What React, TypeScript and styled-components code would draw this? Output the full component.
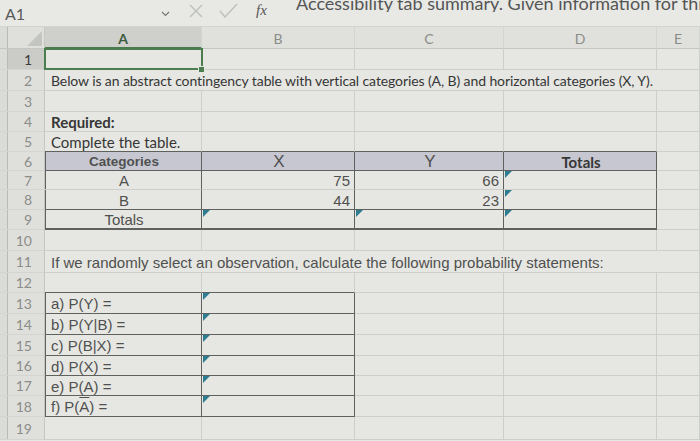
import React from "react";
import styled, { createGlobalStyle, css } from "styled-components";

const GlobalStyle = createGlobalStyle`
  html, body {
    margin: 0;
    padding: 0;
    background: #e6e7e2;
    overflow: hidden;
  }
  body {
    font-family: "Liberation Sans", Arial, sans-serif;
  }
`;

const GRID = "#cdcfca";
const DARK = "#5f615e";
const CAL = `"Lato", "Open Sans", sans-serif`;
const ARI = `"Liberation Sans", Arial, sans-serif`;

const Screen = styled.div`
  width: 700px;
  height: 441px;
  overflow: hidden;
  display: flex;
  flex-direction: column;
  background: #e6e7e2;
`;

const FormulaBar = styled.div`
  height: 26px;
  flex: none;
  display: flex;
  align-items: flex-start;
  background: #e8e9e5;
  border-bottom: 1px solid #d2d4cf;
  overflow: hidden;
`;

const NameBox = styled.div`
  width: 176px;
  flex: none;
  display: flex;
  align-items: center;
  justify-content: space-between;
  padding: 4px 6px 0 5px;
  box-sizing: border-box;
  font-family: ${CAL};
  font-size: 16px;
  color: #5a5a5a;
`;

const BarIcons = styled.div`
  display: flex;
  align-items: center;
  gap: 14px;
  padding: 2px 0 0 12px;
  width: 108px;
  flex: none;
`;

const Fx = styled.span`
  font-family: "Liberation Serif", serif;
  font-style: italic;
  font-size: 15px;
  color: #555;
  margin-left: 4px;
`;

const FormulaText = styled.div`
  font-family: ${CAL};
  font-size: 18px;
  line-height: 18px;
  margin-top: -6px;
  color: #555;
  white-space: nowrap;
  overflow: hidden;
  min-width: 0;
`;

const Sheet = styled.div<{ $rows: string }>`
  display: grid;
  grid-template-columns: 45px 157px 153px 149px 153px 1fr;
  grid-template-rows: ${(p) => p.$rows};
  flex: 1;
`;

const Corner = styled.div`
  background: #dfe0dc;
  border-right: 1px solid #c4c6c1;
  border-bottom: 1px solid #c4c6c1;
  box-shadow: inset 7px 0 0 #dadcd7, inset 8px 0 0 #b9bbb6;
  position: relative;
  svg {
    position: absolute;
    right: 2px;
    bottom: 2px;
  }
`;

const ColHead = styled.div<{ $active?: boolean }>`
  display: flex;
  align-items: center;
  justify-content: center;
  box-sizing: border-box;
  font-family: ${CAL};
  font-size: 14px;
  padding-top: 2px;
  color: #8a8c88;
  background: #e0e1dd;
  border-right: 1px solid #d3d5d0;
  border-bottom: 1px solid #c4c6c1;
  ${(p) =>
    p.$active &&
    css`
      background: #cfd0cb;
      color: #3d5a3f;
      font-weight: 700;
      border-bottom: 2px solid #4c7a50;
    `}
`;

const RowHead = styled.div<{ $active?: boolean }>`
  display: flex;
  align-items: center;
  justify-content: flex-end;
  padding-right: 12px;
  box-sizing: border-box;
  font-family: ${CAL};
  font-size: 14px;
  color: #8b8d89;
  background: #dfe0dc;
  border-right: 1px solid #c4c6c1;
  border-bottom: 1px solid #d3d5d0;
  box-shadow: inset 7px 0 0 #dadcd7, inset 8px 0 0 #b9bbb6;
  ${(p) =>
    p.$active &&
    css`
      background: #cbccc7;
      color: #3b3b3b;
    `}
`;

type CellProps = {
  $span?: number;
  $font?: "cal" | "ari";
  $bold?: boolean;
  $align?: "left" | "center" | "right";
  $head?: boolean;
  $ld?: boolean;
  $rd?: boolean;
  $bd?: number;
  $flag?: boolean;
  $sel?: boolean;
  $size?: number;
  $spacing?: number;
};

const Cell = styled.div<CellProps>`
  grid-column: span ${(p) => p.$span ?? 1};
  position: relative;
  box-sizing: border-box;
  display: flex;
  align-items: center;
  justify-content: ${(p) =>
    p.$align === "center" ? "center" : p.$align === "right" ? "flex-end" : "flex-start"};
  padding: 1px 4px 0 6px;
  white-space: nowrap;
  overflow: visible;
  font-family: ${(p) => (p.$font === "ari" ? ARI : CAL)};
  font-size: ${(p) => p.$size ?? 15}px;
  letter-spacing: ${(p) => (p.$spacing ? `${p.$spacing}px` : "normal")};
  font-weight: ${(p) => (p.$bold ? 700 : 400)};
  color: ${(p) => (p.$font === "ari" ? "#505050" : "#363636")};
  background: ${(p) => (p.$head ? "#c6c7d0" : "transparent")};
  border-right: 1px solid ${(p) => (p.$rd ? DARK : GRID)};
  border-bottom: ${(p) => (p.$bd ? `${p.$bd}px solid ${DARK}` : `1px solid ${GRID}`)};
  ${(p) => p.$ld && css`box-shadow: inset 1px 0 0 ${DARK};`}
  ${(p) =>
    p.$flag &&
    css`
      &::before {
        content: "";
        position: absolute;
        left: 1px;
        top: 0;
        border-top: 7px solid #2e7c91;
        border-right: 7px solid transparent;
      }
    `}
  ${(p) =>
    p.$sel &&
    css`
      &::after {
        content: "";
        position: absolute;
        left: -1px;
        top: -1px;
        right: -2px;
        bottom: -1px;
        border: 2px solid #4b7d4f;
        pointer-events: none;
      }
    `}
`;

const Handle = styled.span`
  position: absolute;
  right: -4px;
  bottom: -4px;
  width: 5px;
  height: 5px;
  background: #4b7d4f;
  border: 1px solid #e6e7e2;
  z-index: 2;
`;

const Bar = styled.span`
  text-decoration: overline;
`;

type Def = CellProps & { text?: React.ReactNode; handle?: boolean };

const tbl = (extra: Def): Def => ({ $font: "ari", $rd: true, ...extra });
const prob = (label: React.ReactNode): Def[] => [
  { text: label, $font: "ari", $ld: true, $rd: true, $bd: 1 },
  { $flag: true, $rd: true, $bd: 1 },
];

const heights = [21, 21, 21, 20, 20, 19, 19, 20, 20, 21, 22, 20, 21, 21, 21, 20, 20, 21, 23];

const rows: Def[][] = [
  [{ $sel: true, handle: true }],
  [
    {
      text: "Below is an abstract contingency table with vertical categories (A, B) and horizontal categories (X, Y).",
      $span: 5,
      $size: 14,
      $spacing: -0.1,
    },
  ],
  [],
  [{ text: "Required:", $bold: true }],
  [
    { text: "Complete the table.", $bd: 1 },
    { $bd: 1 },
    { $bd: 1 },
    { $bd: 1 },
  ],
  [
    tbl({ text: "Categories", $bold: true, $align: "center", $head: true, $ld: true, $bd: 1, $size: 13.5 }),
    tbl({ text: "X", $align: "center", $head: true, $bd: 1, $size: 17 }),
    tbl({ text: "Y", $align: "center", $head: true, $bd: 1, $size: 17 }),
    tbl({ text: "Totals", $font: "cal", $bold: true, $align: "center", $head: true, $bd: 1 }),
  ],
  [
    tbl({ text: "A", $align: "center", $ld: true }),
    tbl({ text: "75", $align: "right" }),
    tbl({ text: "66", $align: "right" }),
    tbl({ $flag: true }),
  ],
  [
    tbl({ text: "B", $align: "center", $ld: true, $bd: 1 }),
    tbl({ text: "44", $align: "right", $bd: 1 }),
    tbl({ text: "23", $align: "right", $bd: 1 }),
    tbl({ $flag: true, $bd: 1 }),
  ],
  [
    tbl({ text: "Totals", $align: "center", $ld: true, $bd: 2 }),
    tbl({ $flag: true, $bd: 2 }),
    tbl({ $flag: true, $bd: 2 }),
    tbl({ $flag: true, $bd: 2 }),
  ],
  [],
  [
    {
      text: "If we randomly select an observation, calculate the following probability statements:",
      $font: "ari",
      $span: 5,
    },
  ],
  [{ $bd: 1 }, { $bd: 1 }],
  prob("a) P(Y) ="),
  prob("b) P(Y|B) ="),
  prob("c) P(B|X) ="),
  prob("d) P(X) ="),
  prob("e) P(A) ="),
  prob(
    <>
      f) P(<Bar>A</Bar>) =
    </>
  ),
  [],
];

function fill(defs: Def[]): Def[] {
  const used = defs.reduce((n, d) => n + (d.$span ?? 1), 0);
  const out = [...defs];
  for (let i = used; i < 5; i++) out.push({});
  return out;
}

export default function App() {
  const template = ["22px", ...heights.map((h) => `${h}px`)].join(" ");
  return (
    <Screen>
      <GlobalStyle />
      <FormulaBar>
        <NameBox>
          <span>A1</span>
          <svg width="9" height="6" viewBox="0 0 9 6">
            <path d="M1 1l3.5 3.5L8 1" fill="none" stroke="#777" strokeWidth="1.2" />
          </svg>
        </NameBox>
        <BarIcons>
          <svg width="16" height="16" viewBox="0 0 16 16">
            <path d="M2 2l12 12M14 2L2 14" stroke="#bdbfba" strokeWidth="1.4" />
          </svg>
          <svg width="20" height="16" viewBox="0 0 20 16">
            <path d="M2 8l5 6L19 1" fill="none" stroke="#bdbfba" strokeWidth="1.4" />
          </svg>
          <Fx>fx</Fx>
        </BarIcons>
        <FormulaText>Accessibility tab summary. Given information for this</FormulaText>
      </FormulaBar>
      <Sheet $rows={template}>
        <Corner>
          <svg width="15" height="15" viewBox="0 0 15 15">
            <polygon points="15,0 15,15 0,15" fill="#c3c5c0" />
          </svg>
        </Corner>
        {["A", "B", "C", "D", "E"].map((c) => (
          <ColHead key={c} $active={c === "A"}>
            {c}
          </ColHead>
        ))}
        {rows.map((r, i) => (
          <React.Fragment key={i}>
            <RowHead $active={i === 0}>{i + 1}</RowHead>
            {fill(r).map(({ text, handle, ...p }, j) => (
              <Cell key={j} {...p}>
                {text}
                {handle && <Handle />}
              </Cell>
            ))}
          </React.Fragment>
        ))}
      </Sheet>
    </Screen>
  );
}
